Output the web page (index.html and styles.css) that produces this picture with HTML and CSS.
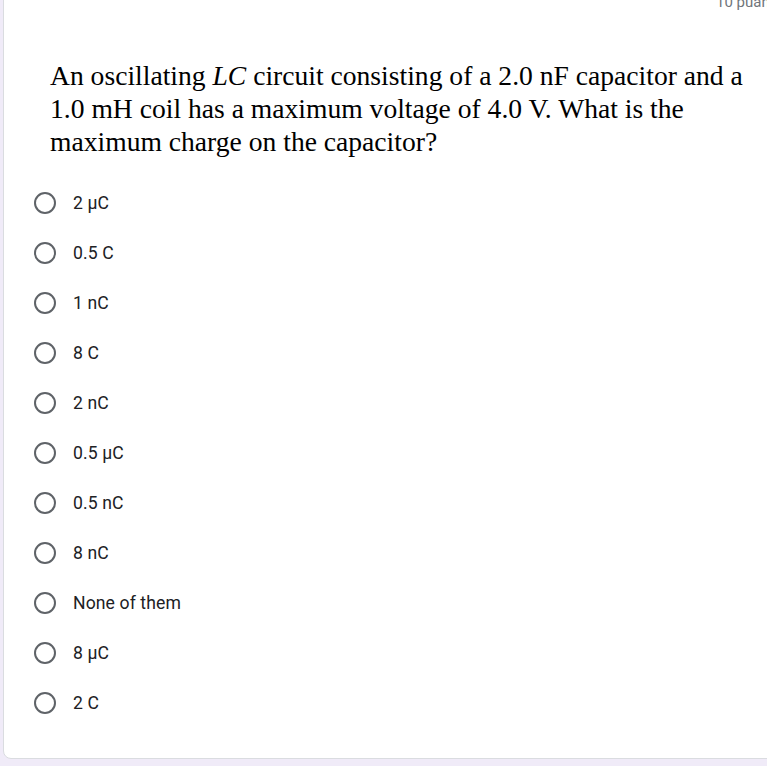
FILE: index.html
```html
<!DOCTYPE html>
<html lang="tr">
<head>
<meta charset="utf-8">
<title>Soru</title>
<link rel="stylesheet" href="styles.css">
</head>
<body>
<div class="card">
  <div class="points">10 puan</div>
  <div class="question">An oscillating <i>LC</i> circuit consisting of a 2.0 nF capacitor and a 1.0 mH coil has a maximum voltage of 4.0 V. What is the maximum charge on the capacitor?</div>
  <div class="options">
    <label class="option"><span class="radio"></span><span class="label">2 μC</span></label>
    <label class="option"><span class="radio"></span><span class="label">0.5 C</span></label>
    <label class="option"><span class="radio"></span><span class="label">1 nC</span></label>
    <label class="option"><span class="radio"></span><span class="label">8 C</span></label>
    <label class="option"><span class="radio"></span><span class="label">2 nC</span></label>
    <label class="option"><span class="radio"></span><span class="label">0.5 μC</span></label>
    <label class="option"><span class="radio"></span><span class="label">0.5 nC</span></label>
    <label class="option"><span class="radio"></span><span class="label">8 nC</span></label>
    <label class="option"><span class="radio"></span><span class="label">None of them</span></label>
    <label class="option"><span class="radio"></span><span class="label">8 μC</span></label>
    <label class="option"><span class="radio"></span><span class="label">2 C</span></label>
  </div>
</div>
</body>
</html>
```

FILE: styles.css
```css
html, body {
  margin: 0;
  padding: 0;
  height: 766px;
  overflow: hidden;
  background: #f0ebf8;
}
.card {
  margin: -30px 0 0 3px;
  width: 820px;
  height: 789px;
  box-sizing: border-box;
  background: #fff;
  border: 1px solid #dadce0;
  border-radius: 8px;
  padding: 21px 0 0 46px;
  font-family: Roboto, "Noto Sans", sans-serif;
}
.points {
  padding-left: 666px;
  white-space: nowrap;
  color: #70757a;
  font-size: 15px;
  line-height: 20px;
  height: 20px;
}
.question {
  width: 712px;
  margin-top: 47px;
  font-family: "Liberation Serif", "Times New Roman", serif;
  font-size: 27.6px;
  line-height: 33px;
  color: #000;
}
.options {
  margin-top: 20px;
  margin-left: -16px;
  display: flex;
  flex-direction: column;
}
.option {
  display: flex;
  align-items: center;
  height: 50px;
  gap: 17px;
}
.radio {
  width: 22px;
  height: 22px;
  box-sizing: border-box;
  border: 2px solid #5f6368;
  border-radius: 50%;
}
.label {
  font-size: 17.6px;
  color: #202124;
  letter-spacing: 0.1px;
}
```
